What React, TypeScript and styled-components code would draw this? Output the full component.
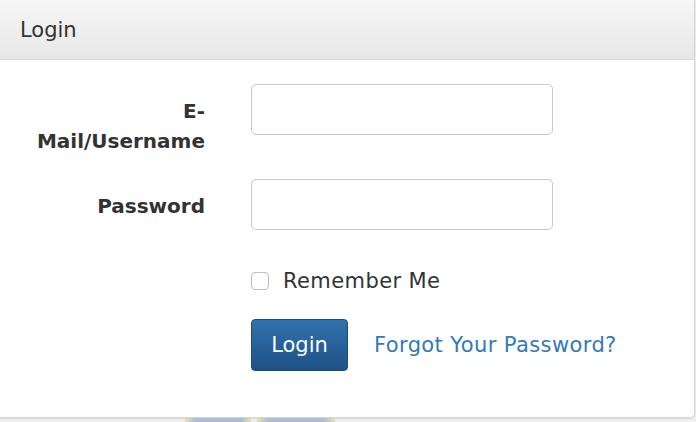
import styled, { createGlobalStyle } from 'styled-components';

const GlobalStyle = createGlobalStyle`
  html, body {
    margin: 0;
    padding: 0;
    background-color: #efefef;
    font-family: 'DejaVu Sans', 'Open Sans', sans-serif;
    color: #333;
  }
`;

const App = () => {
  return (
    <>
      <GlobalStyle />
      <Card>
        <Header>Login</Header>
        <Body>
          <Row $h={51}>
            <Label>
              E-
              <br />
              Mail/Username
            </Label>
            <Input type="text" />
          </Row>
          <Row $h={51} $gap={44}>
            <Label>Password</Label>
            <Input type="password" />
          </Row>
          <Row $h={30} $gap={36}>
            <span />
            <CheckRow>
              <Checkbox type="checkbox" />
              Remember Me
            </CheckRow>
          </Row>
          <Row $h={52} $gap={23}>
            <span />
            <Actions>
              <LoginButton>Login</LoginButton>
              <ForgotLink href="#">Forgot Your Password?</ForgotLink>
            </Actions>
          </Row>
        </Body>
      </Card>
      <Backdrop>
        <Tile $w={66} />
        <Tile $w={78} />
      </Backdrop>
    </>
  );
};

const Card = styled.div`
  width: 695px;
  height: 418px;
  box-sizing: border-box;
  background-color: #fff;
  border-right: 1px solid #d4d4d4;
  border-bottom: 1px solid #d4d4d4;
  border-bottom-right-radius: 5px;
  box-shadow: 0 1px 2px rgba(0, 0, 0, 0.08);
  overflow: hidden;
`;

const Header = styled.div`
  height: 60px;
  box-sizing: border-box;
  padding: 0 20px;
  display: flex;
  align-items: center;
  font-size: 21px;
  color: #333;
  background: linear-gradient(to bottom, #f6f6f6 0%, #e7e7e7 100%);
  border-bottom: 1px solid #d8d8d8;
`;

const Body = styled.div`
  padding-top: 24px;
  display: flex;
  flex-direction: column;
`;

const Row = styled.div<{ $gap?: number; $h: number }>`
  display: grid;
  grid-template-columns: 205px 302px;
  grid-template-rows: ${(p) => p.$h}px;
  column-gap: 46px;
  margin-top: ${(p) => p.$gap ?? 0}px;
`;

const Label = styled.label`
  text-align: right;
  font-weight: 700;
  font-size: 20px;
  line-height: 30px;
  color: #333;
  padding-top: 12px;
  white-space: nowrap;
`;

const Input = styled.input`
  box-sizing: border-box;
  width: 302px;
  height: 51px;
  border: 1px solid #c8c8c8;
  border-radius: 5px;
  background: #fff;
  outline: none;
`;

const CheckRow = styled.label`
  display: flex;
  align-items: center;
  gap: 14px;
  height: 30px;
  font-size: 21px;
  letter-spacing: 0.4px;
  color: #333;
  white-space: nowrap;
`;

const Checkbox = styled.input`
  appearance: none;
  margin: 0;
  width: 18px;
  height: 18px;
  box-sizing: border-box;
  border: 1px solid #bdbdbd;
  border-radius: 4px;
  background: #fff;
`;

const Actions = styled.div`
  display: flex;
  align-items: center;
  gap: 26px;
  white-space: nowrap;
`;

const LoginButton = styled.button`
  flex: none;
  width: 97px;
  height: 52px;
  box-sizing: border-box;
  border: 1px solid #1d4a78;
  border-radius: 4px;
  background: linear-gradient(to bottom, #3072ad 0%, #1f5186 100%);
  color: #fff;
  font-family: inherit;
  font-size: 21px;
  cursor: pointer;
`;

const ForgotLink = styled.a`
  font-size: 21px;
  letter-spacing: 0.4px;
  color: #337ab7;
  text-decoration: none;
`;

const Backdrop = styled.div`
  display: flex;
  gap: 6px;
  padding-left: 185px;
`;

const Tile = styled.div<{ $w: number }>`
  width: ${(p) => p.$w}px;
  height: 4px;
  background: linear-gradient(to right, #e8e2a8, #aebcd8 15%, #aebcd8 85%, #e8e2a8);
`;

export default App;
